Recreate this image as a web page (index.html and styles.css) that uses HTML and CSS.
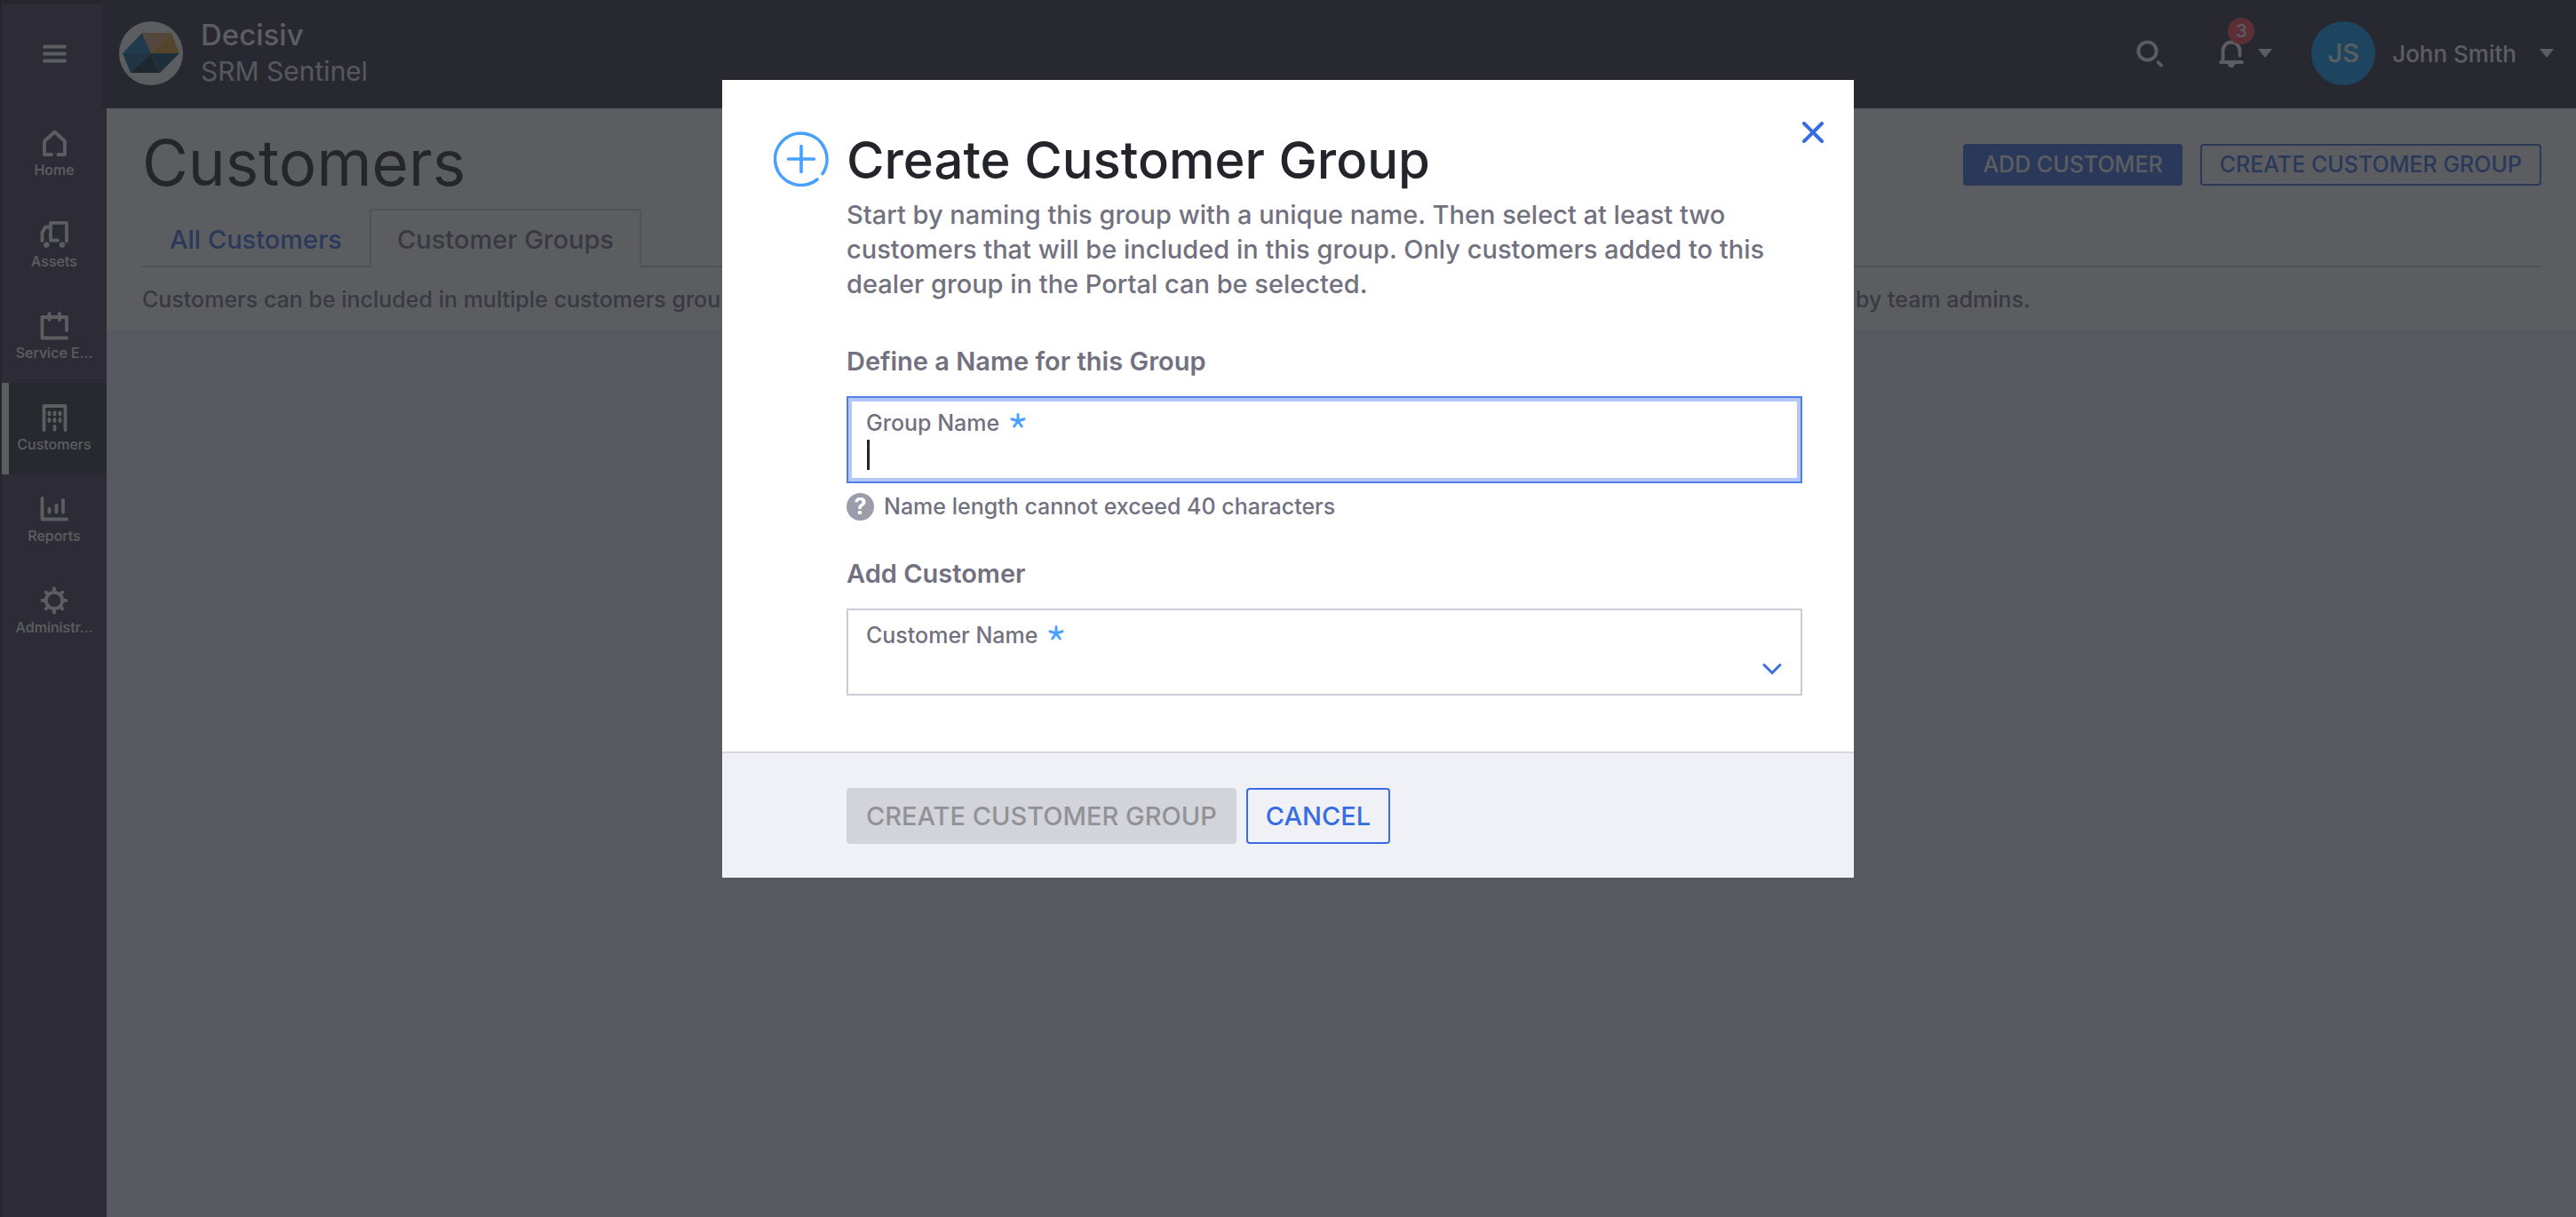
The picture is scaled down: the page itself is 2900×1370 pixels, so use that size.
FILE: index.html
```
<!DOCTYPE html>
<html lang="en">

<head>
    <meta charset="UTF-8">
    <meta name="viewport" content="width=device-width, initial-scale=1.0">
    <title>Customers</title>
    <link rel="stylesheet" href="styles.css">
</head>

<body>
    <div class="app">
        <aside class="sidebar">
            <button type="button" class="menu-btn" aria-label="Menu">
                <svg class="icon" viewBox="0 0 32 32"><path d="M5 8.500H28M5 16.500H28M5 24.500H28" /></svg>
            </button>
            <nav class="side-nav">
                <a href="#" class="side-item">
                    <svg class="icon" viewBox="0 0 32 32"><path d="M13 29H5V14L16.500 3.500 28 14V29H20.500" /></svg>
                    <span>Home</span>
                </a>
                <a href="#" class="side-item">
                    <svg class="icon" viewBox="0 0 32 32">
                        <path d="M30 23.500V2.800H12V22.500H20M2.500 23V14L6 7.500H10" />
                        <circle class="solid" cx="7.300" cy="27.600" r="3.200" />
                        <circle class="solid" cx="25" cy="27.600" r="3.200" />
                    </svg>
                    <span>Assets</span>
                </a>
                <a href="#" class="side-item">
                    <svg class="icon" viewBox="0 0 32 32"><path d="M30 21V6H2.500V29.500H30M10.500 2V9M22 2V9" /></svg>
                    <span>Service E...</span>
                </a>
                <a href="#" class="side-item active">
                    <svg class="icon" viewBox="0 0 32 32"><path d="M4.500 30V3H28.500V30M10.500 10.500V12.500M16.500 10.500V12.500M22.500 10.500V12.500M10.500 18V20M16.500 18V20M22.500 18V20M16.500 26V29.500" /></svg>
                    <span>Customers</span>
                </a>
                <a href="#" class="side-item">
                    <svg class="icon" viewBox="0 0 32 32"><path d="M2.500 4V27.500H30M10.500 16V19.500M18.500 12V19.500M26 6V19.500" /></svg>
                    <span>Reports</span>
                </a>
                <a href="#" class="side-item">
                    <svg class="icon" viewBox="0 0 32 32">
                        <circle cx="16" cy="16" r="9.200" />
                        <path d="M16 2.500V5M16 27V29.500M2.500 16H5M27 16H29.500M6.700 6.700L8.200 8.200M23.800 23.800L25.300 25.300M6.700 25.300L8.200 23.800M23.800 8.200L25.300 6.700" />
                    </svg>
                    <span>Administr...</span>
                </a>
            </nav>
        </aside>

        <div class="main">
            <header class="topbar">
                <svg class="logo" viewBox="0 0 72 72">
                    <circle cx="36" cy="36" r="36" fill="#fff" />
                    <path d="M26 13L36 36H4z" fill="#1274b4" />
                    <path d="M26 13H59L36 36z" fill="#e0a870" />
                    <path d="M59 13L68 36H36z" fill="#e09a2c" />
                    <path d="M4 36H36L13 58z" fill="#0c5c8c" />
                    <path d="M36 36L46 58H13z" fill="#082834" />
                    <path d="M36 36H68L46 58z" fill="#054a68" />
                </svg>
                <div class="brand">
                    <div class="brand-name">Decisiv</div>
                    <div class="brand-sub">SRM Sentinel</div>
                </div>
                <div class="tools">
                    <button type="button" class="tool" aria-label="Search">
                        <svg class="icon" viewBox="0 0 32 32"><circle cx="13.500" cy="13.500" r="10.200" /><path d="M25.500 26L29 29.500" /></svg>
                    </button>
                    <button type="button" class="tool bell" aria-label="Notifications">
                        <svg class="icon" viewBox="0 0 32 32">
                            <path d="M6.500 25V13A9.500 9.500 0 0 1 25.500 13V18.500M4 26H28" />
                            <path class="solid" d="M11.500 27H20.500Q19.500 32 16 32Q12.500 32 11.500 27z" />
                        </svg>
                        <span class="badge">3</span>
                        <span class="arrow"></span>
                    </button>
                    <button type="button" class="tool user">
                        <span class="avatar">JS</span>
                        <span class="user-name">John Smith</span>
                        <span class="arrow"></span>
                    </button>
                </div>
            </header>

            <section class="page-head">
                <div class="title-row">
                    <h1>Customers</h1>
                    <div class="actions">
                        <button type="button" class="btn btn-fill">ADD CUSTOMER</button>
                        <button type="button" class="btn btn-line">CREATE CUSTOMER GROUP</button>
                    </div>
                </div>
                <div class="tabs">
                    <a href="#" class="tab">All Customers</a>
                    <a href="#" class="tab current">Customer Groups</a>
                </div>
                <p class="note">Customers can be included in multiple customers groups. Customers groups are visible to everyone in your organization, but they can only be created and edited by team admins.</p>
            </section>
        </div>
    </div>

    <div class="overlay">
        <form class="modal" role="dialog" aria-labelledby="modalTitle">
            <button type="button" class="close" aria-label="Close">
                <svg viewBox="0 0 24 24"><path d="M2 2L22 22M22 2L2 22" /></svg>
            </button>
            <div class="modal-body">
                <svg class="plus" viewBox="0 0 62 62"><path d="M49 54A29.200 29.200 0 1 1 55 47.500M31 16.500V45.500M16.500 31H45.500" /></svg>
                <div class="modal-content">
                    <h2 id="modalTitle">Create Customer Group</h2>
                    <p class="intro">Start by naming this group with a unique name. Then select at least two customers that will be included in this group. Only customers added to this dealer group in the Portal can be selected.</p>

                    <h3>Define a Name for this Group</h3>
                    <div class="field focus">
                        <label for="groupName">Group Name
                            <svg class="star" viewBox="0 0 18 18"><path d="M9 9V1.500M9 9L2 6.700M9 9L16 6.700M9 9L4.700 15M9 9L13.300 15" /></svg>
                        </label>
                        <div class="entry">
                            <span class="cursor"></span>
                            <input type="text" id="groupName" maxlength="40">
                        </div>
                    </div>
                    <div class="hint"><span class="help">?</span>Name length cannot exceed 40 characters</div>

                    <h3 class="second">Add Customer</h3>
                    <div class="field">
                        <label for="customerName">Customer Name
                            <svg class="star" viewBox="0 0 18 18"><path d="M9 9V1.500M9 9L2 6.700M9 9L16 6.700M9 9L4.700 15M9 9L13.300 15" /></svg>
                        </label>
                        <div class="entry">
                            <select id="customerName">
                                <option value=""></option>
                            </select>
                            <svg class="chevron" viewBox="0 0 24 14"><path d="M3 2.500L12 11.500L21 2.500" /></svg>
                        </div>
                    </div>
                </div>
            </div>
            <div class="modal-foot">
                <button type="submit" class="btn btn-big btn-off" disabled>CREATE CUSTOMER GROUP</button>
                <button type="button" class="btn btn-big btn-line">CANCEL</button>
            </div>
        </form>
    </div>
</body>

</html>
```
FILE: styles.css
```
* {
    box-sizing: border-box;
}

body {
    margin: 0;
    font-family: Inter, "Liberation Sans", sans-serif;
    font-weight: 500;
    color: #72717f;
    background-color: #f0eefc;
}

h1, h2, h3, p {
    margin: 0;
}

a {
    text-decoration: none;
}

button {
    font: inherit;
    color: inherit;
    padding: 0;
    border: 0;
    background: none;
}

.app {
    display: flex;
    min-height: 100vh;
}

/* left menu */
.sidebar {
    flex: 0 0 120px;
    border-left: 2px solid #24252b;
    border-top: 4px solid #24252b;
    background-color: #433f55;
    color: #fff;
}

.menu-btn {
    display: flex;
    width: 100%;
    height: 118px;
    padding-top: 40px;
    justify-content: center;
}

.icon {
    width: 32px;
    height: 32px;
    flex: none;
    fill: none;
    stroke: currentColor;
    stroke-width: 3.800;
    stroke-linecap: round;
    stroke-linejoin: round;
}

.icon .solid {
    fill: currentColor;
    stroke: none;
}

.side-item {
    display: flex;
    flex-direction: column;
    align-items: center;
    gap: 4px;
    height: 103px;
    padding-top: 23px;
    font-size: 16px;
    line-height: 20px;
    color: #fff;
}

.side-item.active {
    background-color: #302e38;
    box-shadow: inset 8px 0 #fff;
}

/* top bar */
.main {
    flex: 1;
    min-width: 0;
}

.topbar {
    display: flex;
    align-items: center;
    height: 122px;
    margin-left: -6px;
    padding: 0 25px 2px 20px;
    background-color: #312e40;
    color: #fff;
}

.logo {
    width: 72px;
    height: 72px;
    margin-right: 20px;
}

.brand {
    padding-bottom: 2px;
}

.brand-name {
    font-size: 33px;
    line-height: 42px;
}

.brand-sub {
    font-size: 30px;
    font-weight: 400;
    line-height: 40px;
    color: #e8e6f4;
}

.tools {
    display: flex;
    align-items: center;
    margin-left: auto;
}

.tool {
    display: flex;
    align-items: center;
}

.bell {
    position: relative;
    gap: 14px;
    margin: 0 44px 0 60px;
}

.badge {
    position: absolute;
    left: 12px;
    top: -24px;
    width: 30px;
    height: 30px;
    border-radius: 50%;
    background-color: #ff4854;
    font-size: 20px;
    line-height: 30px;
}

.arrow {
    border: 8px solid transparent;
    border-top: 10px solid #fff;
    border-bottom: 0;
}

.avatar {
    width: 72px;
    height: 72px;
    margin-right: 19px;
    border-radius: 50%;
    background-color: #049ffb;
    font-size: 29px;
    line-height: 72px;
}

.user-name {
    margin-right: 26px;
    font-size: 26px;
}

/* page heading */
.page-head {
    height: 250px;
    padding: 21px 39px 0 40px;
    background-color: #fff;
}

.title-row {
    display: flex;
    justify-content: space-between;
    align-items: center;
}

h1 {
    font-size: 71px;
    font-weight: 400;
    line-height: 80px;
    color: #24252b;
}

.actions {
    display: flex;
    gap: 20px;
    padding-top: 4px;
}

.btn {
    height: 47px;
    padding: 0 20px;
    border: 2px solid #386de2;
    border-radius: 4px;
    font-size: 25px;
    white-space: nowrap;
}

.btn-fill {
    background-color: #386de2;
    color: #fff;
}

.btn-line {
    color: #386de2;
}

.tabs {
    display: flex;
    margin-top: 12px;
    border-bottom: 2px solid #d2d3dc;
}

.tab {
    height: 64px;
    padding: 0 29px;
    border: 2px solid transparent;
    border-bottom: 0;
    font-size: 29px;
    line-height: 66px;
    color: #386de2;
}

.tab.current {
    height: 66px;
    margin-bottom: -2px;
    border-color: #d2d3dc;
    border-radius: 4px 4px 0 0;
    background-color: #fff;
    color: #72717f;
}

.note {
    margin-top: 18px;
    font-size: 25px;
    line-height: 36px;
    white-space: nowrap;
}

/* dialog */
.overlay {
    position: fixed;
    inset: 0;
    display: flex;
    justify-content: center;
    align-items: flex-start;
    padding-top: 90px;
    background-color: rgba(37, 39, 44, 0.75);
}

.modal {
    position: relative;
    width: 1274px;
    max-width: 96%;
    background-color: #fff;
}

.close {
    position: absolute;
    top: 47px;
    right: 34px;
    width: 24px;
    height: 24px;
}

.close svg {
    display: block;
    fill: none;
    stroke: #386de2;
    stroke-width: 4;
    stroke-linecap: round;
}

.modal-body {
    display: grid;
    grid-template-columns: 62px 1fr;
    column-gap: 20px;
    padding: 55px 58px 63px;
}

.plus {
    width: 62px;
    height: 62px;
    margin-top: 3px;
    fill: none;
    stroke: #48a1ff;
    stroke-width: 3.600;
    stroke-linecap: round;
}

h2 {
    font-size: 58px;
    font-weight: 500;
    line-height: 70px;
    color: #24252b;
}

.intro {
    margin-top: 7px;
    font-size: 29px;
    line-height: 39px;
}

h3 {
    margin: 50px 0 21px;
    font-size: 29px;
    font-weight: 600;
    line-height: 36px;
}

h3.second {
    margin-top: 42px;
}

.field {
    height: 98px;
    padding: 13px 20px 0;
    border: 2px solid #c9ccd6;
}

.field.focus {
    border-color: #4d7fe6;
    box-shadow: inset 0 0 0 4px #b3c8f5;
}

.field label {
    display: flex;
    gap: 12px;
    font-size: 25px;
    line-height: 30px;
}

.star {
    width: 18px;
    height: 18px;
    margin-top: 4px;
    fill: none;
    stroke: #48a1ff;
    stroke-width: 3;
    stroke-linecap: round;
}

.entry {
    position: relative;
}

.field input,
.field select {
    display: block;
    width: 100%;
    height: 44px;
    padding: 0;
    border: 0;
    outline: 0;
    appearance: none;
    background: none;
    font: inherit;
    font-size: 29px;
    color: #24252b;
}

.cursor {
    position: absolute;
    left: 1px;
    top: 4px;
    width: 3px;
    height: 34px;
    background-color: #24252b;
}

.chevron {
    position: absolute;
    right: 0;
    top: 16px;
    width: 24px;
    height: 14px;
    fill: none;
    stroke: #386de2;
    stroke-width: 3;
    stroke-linecap: round;
    pointer-events: none;
}

.hint {
    display: flex;
    align-items: center;
    gap: 11px;
    margin-top: 10px;
    font-size: 25px;
    line-height: 32px;
}

.help {
    width: 31px;
    height: 31px;
    border-radius: 50%;
    background-color: #9c9daa;
    color: #fff;
    font-weight: 700;
    line-height: 31px;
    text-align: center;
}

.modal-foot {
    display: flex;
    gap: 11px;
    padding: 39px 58px 38px 140px;
    border-top: 2px solid #d6d8de;
    background-color: #f0f1f7;
}

.btn-big {
    height: 63px;
    font-size: 29px;
}

.btn-off {
    border-color: #d3d4d9;
    background-color: #d3d4d9;
    color: #919298;
}
```
